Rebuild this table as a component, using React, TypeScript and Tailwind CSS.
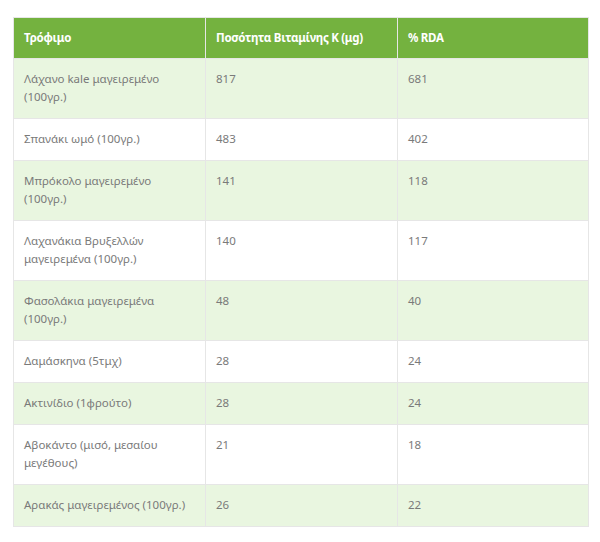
import React from "react";

const rows: { food: React.ReactNode; amount: string; rda: string; lines: number }[] = [
  { food: <>Λάχανο kale μαγειρεμένο<br />(100γρ.)</>, amount: "817", rda: "681", lines: 2 },
  { food: <>Σπανάκι ωμό (100γρ.)</>, amount: "483", rda: "402", lines: 1 },
  { food: <>Μπρόκολο μαγειρεμένο<br />(100γρ.)</>, amount: "141", rda: "118", lines: 2 },
  { food: <>Λαχανάκια Βρυξελλών<br />μαγειρεμένα (100γρ.)</>, amount: "140", rda: "117", lines: 2 },
  { food: <>Φασολάκια μαγειρεμένα<br />(100γρ.)</>, amount: "48", rda: "40", lines: 2 },
  { food: <>Δαμάσκηνα (5τμχ)</>, amount: "28", rda: "24", lines: 1 },
  { food: <>Ακτινίδιο (1φρούτο)</>, amount: "28", rda: "24", lines: 1 },
  { food: <>Αβοκάντο (μισό, μεσαίου<br />μεγέθους)</>, amount: "21", rda: "18", lines: 2 },
  { food: <>Αρακάς μαγειρεμένος (100γρ.)</>, amount: "26", rda: "22", lines: 1 },
];

const cell = "border border-[#e6e6e6] px-[10px] pt-[11px] pb-0 align-top text-[#7a7a7a] leading-[18px]";

export default function App() {
  return (
    <div className="w-[600px] h-[542px] bg-white pt-[17px] pl-[13px]" style={{ fontFamily: '"Noto Sans", "DejaVu Sans", sans-serif' }}>
      <table className="w-[575px] table-fixed border-collapse border border-[#e6e6e6] text-[11.5px]">
        <colgroup>
          <col className="w-[192px]" />
          <col className="w-[192px]" />
          <col className="w-[191px]" />
        </colgroup>
        <thead>
          <tr className="bg-[#74b23f] h-[41px]">
            <th className="border border-[#e6e6e6] text-left font-bold text-white px-[10px] py-0 align-middle tracking-[-0.3px]">Τρόφιμο</th>
            <th className="border border-[#e6e6e6] text-left font-bold text-white px-[10px] py-0 align-middle tracking-[-0.3px]">Ποσότητα Βιταμίνης Κ (μg)</th>
            <th className="border border-[#e6e6e6] text-left font-bold text-white px-[10px] py-0 align-middle tracking-[-0.3px]">% RDA</th>
          </tr>
        </thead>
        <tbody>
          {rows.map((r, i) => (
            <tr
              key={i}
              className={(i % 2 === 0 ? "bg-[#e9f6e0]" : "bg-white") + " " + (r.lines === 2 ? "h-[60px]" : "h-[42px]")}
            >
              <td className={cell + " whitespace-nowrap"}>{r.food}</td>
              <td className={cell}>{r.amount}</td>
              <td className={cell}>{r.rda}</td>
            </tr>
          ))}
        </tbody>
      </table>
    </div>
  );
}
